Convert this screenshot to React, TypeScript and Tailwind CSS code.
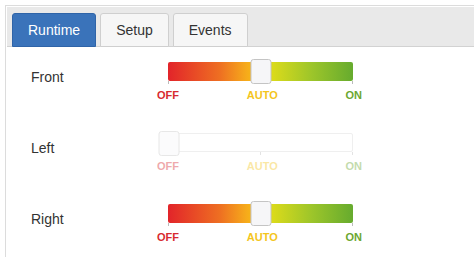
import { useState } from "react";

const tabs = ["Runtime", "Setup", "Events"];

interface IRow {
  label: string;
  value: number;
  disabled?: boolean;
}

const rows: IRow[] = [
  { label: "Front", value: 50 },
  { label: "Left", value: 0, disabled: true },
  { label: "Right", value: 50 },
];

const ModeSlider = ({ value, disabled }: { value: number; disabled?: boolean }) => {
  return (
    <div className={`flex w-[185px] flex-col pt-[3px] ${disabled ? "opacity-40" : ""}`}>
      <div
        className={`relative h-[19px] rounded-[2px] ${
          disabled
            ? "border border-[#d8d8d8] bg-white"
            : "bg-[linear-gradient(to_right,#e2242a_0%,#ee6f22_28%,#f6a91b_42%,#f8c412_50%,#dcdb1b_56%,#9cc52a_78%,#66ab2e_100%)]"
        }`}
      >
        {/* thumb sits over the track */}
        <div
          className="absolute -top-[3px] h-[25px] w-[21px] -translate-x-1/2 rounded-[3px] border border-[#c4c4c4] bg-[#f6f6f8]"
          style={{ left: `${value}%` }}
        />
      </div>
      <div className="flex h-[3px] justify-between">
        <span className="w-px bg-[#bbb]" />
        <span className="w-px bg-[#bbb]" />
        <span className="w-px bg-[#bbb]" />
      </div>
      <div className="-ml-[11px] -mr-[9px] mt-[5px] flex justify-between text-[11px] font-bold leading-[13px]">
        <span className="text-[#d82a2f]">OFF</span>
        <span className="text-[#f4c51d]">AUTO</span>
        <span className="text-[#6ca731]">ON</span>
      </div>
    </div>
  );
};

const App = () => {
  const [active, setActive] = useState(0);

  return (
    <div
      className="h-[257px] w-[474px] overflow-hidden bg-white"
      style={{ fontFamily: '"Liberation Sans", Arial, sans-serif' }}
    >
      <div className="ml-[5px] mt-[5px] h-[260px] border-l border-t border-[#dcdcdc] p-px pr-0">
        <div className="flex gap-1 border-b border-[#d2d2d2] bg-[#e9e9e9] pl-[5px] pt-[6px]">
          {tabs.map((tab, i) => (
            <button
              key={tab}
              onClick={() => setActive(i)}
              className={`-mb-px rounded-t-[3px] border px-[15px] py-[6px] text-[14px] leading-[20px] ${
                active === i
                  ? "border-[#2f64a8] bg-[#3a73ba] text-white"
                  : "border-[#cfcfcf] bg-[#f6f6f6] text-[#333]"
              }`}
            >
              {tab}
            </button>
          ))}
        </div>
        <div className="pt-[12px]">
          {rows.map((row) => (
            <div key={row.label} className="flex h-[71px] items-start">
              <div className="ml-[24px] mt-[8px] w-[137px] text-[14px] leading-[20px] text-[#333]">
                {row.label}
              </div>
              <ModeSlider value={row.value} disabled={row.disabled} />
            </div>
          ))}
        </div>
      </div>
    </div>
  );
};

export default App;
